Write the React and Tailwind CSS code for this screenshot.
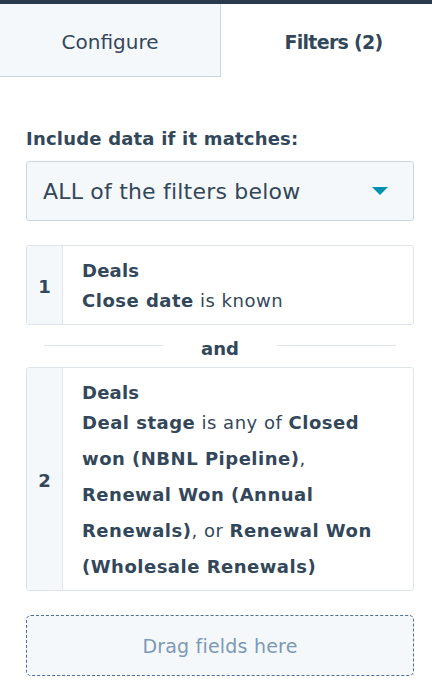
import React from "react";

const font = { fontFamily: "'DejaVu Sans', 'Noto Sans', sans-serif" };

function Card({ n, children }) {
  return (
    <div className="flex border border-[#dfe3eb] rounded-[3px] bg-white">
      <div className="w-[36px] shrink-0 bg-[#f5f8fa] border-r border-[#dfe3eb] flex items-center justify-center text-[18px] font-bold text-[#33475b] rounded-l-[3px] pt-[2px]">
        {n}
      </div>
      <div className="flex-1 pl-[19px] pr-2 pt-[13px] pb-[5px] text-[18px] text-[#33475b] whitespace-nowrap tracking-[0.5px]">
        <div className="font-bold leading-[24px] tracking-[0.2px]">Deals</div>
        <div className="leading-[36px]">{children}</div>
      </div>
    </div>
  );
}

export default function App() {
  return (
    <div style={font} className="w-[432px] h-[688px] bg-white text-[#33475b] overflow-hidden flex flex-col">
      <div className="h-[4px] bg-[#283a4c] shrink-0" />
      <div className="flex h-[73px] shrink-0">
        <div className="w-[221px] bg-[#f5f8fa] border-r border-b border-[#cbd6e2] flex items-center justify-center text-[20px] text-[#33475b] pt-[3px]">
          Configure
        </div>
        <div className="flex-1 flex items-center justify-center text-[19px] font-bold tracking-[-0.7px] text-[#33475b] pt-[3px] pl-[14px]">
          Filters (2)
        </div>
      </div>
      <div className="pl-[26px] pr-[18px] pt-[49px] flex flex-col">
        <div className="text-[18px] font-bold leading-[24px] tracking-[0.2px] pt-[1px] h-[24px]">Include data if it matches:</div>
        <div className="mt-[11px] h-[60px] bg-[#f5f8fa] border border-[#cbd6e2] rounded-[3px] flex items-center justify-between pl-[16px] pr-[25px]">
          <span className="text-[22px] text-[#33475b] tracking-[0.2px] pt-[1px]">ALL of the filters below</span>
          <svg width="16" height="8" viewBox="0 0 16 8">
            <path d="M0 0 L16 0 L8 8 Z" fill="#0091ae" />
          </svg>
        </div>
        <div className="mt-[24px]">
          <Card n="1">
            <b>Close date</b> is known
          </Card>
        </div>
        <div className="h-[42px] flex items-center px-[18px] pt-[1px]">
          <div className="flex-1 h-px bg-[#dfe3eb] mt-[-3px]" />
          <div className="px-[38px] text-[18px] font-bold leading-none pt-[4px]">and</div>
          <div className="flex-1 h-px bg-[#dfe3eb] mt-[-3px]" />
        </div>
        <Card n="2">
          <b>Deal stage</b> is any of <b>Closed</b>
          <br />
          <b>won (NBNL Pipeline)</b>,
          <br />
          <b>Renewal Won (Annual</b>
          <br />
          <b>Renewals)</b>, or <b>Renewal Won</b>
          <br />
          <b>(Wholesale Renewals)</b>
        </Card>
        <div className="mt-[24px] h-[61px] bg-[#f5f8fa] border border-dashed border-[#516f90] rounded-[5px] flex items-center justify-center text-[19px] text-[#7c98b6] tracking-[0.2px] pt-[2px]">
          Drag fields here
        </div>
      </div>
    </div>
  );
}
